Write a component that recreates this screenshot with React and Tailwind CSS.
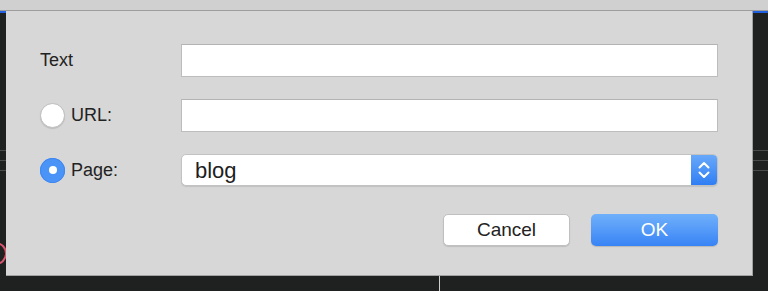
import React from 'react';

const font = { fontFamily: '"Liberation Sans", Arial, sans-serif' };

const Radio = ({ checked }) =>
  checked ? (
    <span className="flex h-[25px] w-[25px] items-center justify-center rounded-full bg-[#4a93f7] shadow-[inset_0_0_0_1px_#3f86ee]">
      <span className="h-[8px] w-[8px] rounded-full bg-white" />
    </span>
  ) : (
    <span className="h-[25px] w-[25px] rounded-full border border-[#bdbdbd] bg-white shadow-[0_1px_1px_rgba(0,0,0,0.12)]" />
  );

const TextBox = () => (
  <div className="h-[33px] w-full border border-[#bdbdbd] border-t-[#b3b3b3] bg-white" />
);

const App = () => {
  return (
    <div className="relative h-[291px] w-[768px] overflow-hidden bg-[#1f2020] text-[#222]" style={font}>
      {/* stuff behind the sheet */}
      <div className="absolute left-0 right-0 top-[150px] h-px bg-[#4a4b4b]" />
      <div className="absolute left-0 right-0 top-[160px] h-px bg-[#4a4b4b]" />
      <div className="absolute left-0 right-0 top-[170px] h-px bg-[#4a4b4b]" />
      <div className="absolute left-[439px] top-[270px] h-[30px] w-px bg-[#cfcfcf]" />
      <div className="absolute left-[-16px] top-[242px] h-[23px] w-[23px] rounded-full border-2 border-[#d9566f]" />

      <div className="relative h-[11px] border-b border-[#9d9d9d] bg-[#d0d0d0]" />

      <div className="relative">
        <div className="absolute left-0 right-0 top-0 h-[2px] bg-[#1f5fe0]" />
        <div className="relative ml-[6px] flex h-[265px] w-[747px] flex-col border-b border-r border-[#a2a2a2] bg-[#d7d7d7] px-[34px] pt-[33px]">
          <div className="grid grid-cols-[141px_1fr] items-center gap-y-[22px]">
            <div className="text-[18px]">Text</div>
            <TextBox />

            <div className="flex items-center gap-[6px]">
              <Radio />
              <span className="text-[18px]">URL:</span>
            </div>
            <TextBox />

            <div className="flex items-center gap-[6px]">
              <Radio checked />
              <span className="text-[18px]">Page:</span>
            </div>
            <div className="flex h-[32px] items-stretch rounded-[5px] border border-[#c2c2c2] bg-white shadow-[0_1px_1px_rgba(0,0,0,0.1)]">
              <div className="flex flex-1 items-center pl-[13px] text-[22px] text-[#1e1e1e]">blog</div>
              <div className="flex w-[26px] items-center justify-center rounded-r-[4px] bg-gradient-to-b from-[#67a8fa] to-[#2f7ef4]">
                <svg width="14" height="22" viewBox="0 0 14 22" fill="none" stroke="white" strokeWidth="2" strokeLinecap="round" strokeLinejoin="round">
                  <path d="M2.5 8.5 7 4 11.5 8.5" />
                  <path d="M2.5 13.5 7 18 11.5 13.5" />
                </svg>
              </div>
            </div>
          </div>

          <div className="mt-[28px] flex justify-end gap-[21px]">
            <button className="h-[32px] w-[127px] rounded-[5px] border border-[#c0c0c0] bg-white text-[19px] text-[#222] shadow-[0_1px_1px_rgba(0,0,0,0.12)]">
              Cancel
            </button>
            <button className="h-[32px] w-[127px] rounded-[5px] bg-gradient-to-b from-[#70b0fa] to-[#3783f5] text-[19px] text-white shadow-[0_1px_1px_rgba(0,0,0,0.15)]">
              OK
            </button>
          </div>
        </div>
      </div>
    </div>
  );
};

export default App;
